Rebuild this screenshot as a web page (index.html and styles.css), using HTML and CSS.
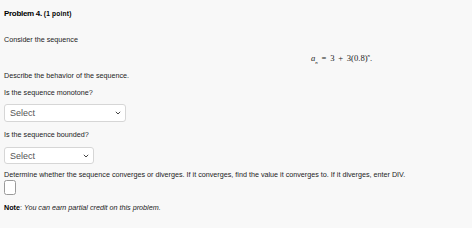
FILE: index.html
```html
<!DOCTYPE html>
<html>
<head>
<meta charset="utf-8">
<link rel="stylesheet" href="styles.css">
</head>
<body>
<div class="problem">
  <h3 class="title">Problem 4. <span class="points">(1 point)</span></h3>
  <p class="line consider">Consider the sequence</p>
  <div class="math"><i>a</i><sub><i>n</i></sub> = 3 + 3(0.8)<sup><i>n</i></sup>.</div>
  <p class="line describe">Describe the behavior of the sequence.</p>
  <p class="line q1">Is the sequence monotone?</p>
  <div class="select wide"><span>Select</span><svg class="chev" width="6" height="4" viewBox="0 0 6 4"><path d="M0.8 0.8 L3 3 L5.2 0.8" fill="none" stroke="#444" stroke-width="1"/></svg></div>
  <p class="line q2">Is the sequence bounded?</p>
  <div class="select narrow"><span>Select</span><svg class="chev" width="6" height="4" viewBox="0 0 6 4"><path d="M0.8 0.8 L3 3 L5.2 0.8" fill="none" stroke="#444" stroke-width="1"/></svg></div>
  <p class="line determine">Determine whether the sequence converges or diverges. If it converges, find the value it converges to. If it diverges, enter DIV.</p>
  <div class="answer"></div>
  <p class="line note"><b>Note</b>: <i>You can earn partial credit on this problem.</i></p>
</div>
</body>
</html>
```
FILE: styles.css
```css
html, body {
  margin: 0;
  padding: 0;
  background: #ffffff;
}
.problem {
  width: 468px;
  height: 228px;
  padding-left: 4px;
  background: #f8f8f8;
  font-family: "Liberation Sans", Arial, sans-serif;
  color: #1c1c1c;
  overflow: hidden;
}
.title {
  margin: 8px 0 0 0;
  font-size: 8px;
  line-height: 12px;
  font-weight: bold;
  color: #000;
  letter-spacing: -0.3px;
}
.points {
  font-size: 6.6px;
  letter-spacing: 0.2px;
}
.line {
  margin: 0;
  font-size: 7.2px;
  line-height: 12px;
}
.consider { margin-top: 14px; }
.math {
  margin-top: 6px;
  height: 12px;
  line-height: 12px;
  padding-left: 307px;
  font-family: "Liberation Serif", "DejaVu Serif", serif;
  font-size: 8.6px;
  word-spacing: 1.6px;
  color: #222;
}
.math sub { font-size: 5px; line-height: 0; }
.math sup { font-size: 5px; line-height: 0; }
.describe { margin-top: 6px; }
.q1 { margin-top: 5px; }
.select {
  box-sizing: border-box;
  display: flex;
  align-items: center;
  justify-content: space-between;
  background: #fff;
  border: 1px solid #d6d6d6;
  border-radius: 3px;
  padding: 0 4px 0 5px;
  font-size: 9px;
  color: #555;
}
.wide {
  margin-top: 5px;
  width: 122px;
  height: 18px;
}
.narrow {
  margin-top: 6px;
  width: 90px;
  height: 17px;
}
.q2 { margin-top: 7px; }
.determine {
  margin-top: 6px;
  line-height: 10px;
}
.answer {
  box-sizing: border-box;
  width: 12px;
  height: 15px;
  background: #fff;
  border: 1px solid #9a9a9a;
  border-radius: 2.5px;
}
.note { margin-top: 7px; }
.note b { font-weight: bold; color: #000; }
```
